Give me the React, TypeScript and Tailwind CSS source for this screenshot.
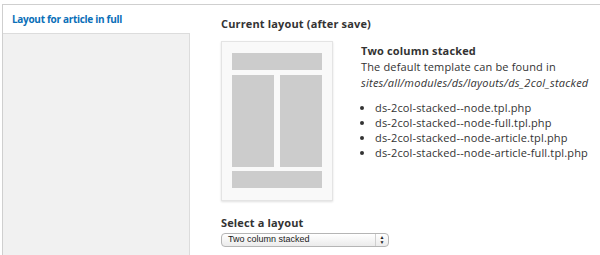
const files = [
  "ds-2col-stacked--node.tpl.php",
  "ds-2col-stacked--node-full.tpl.php",
  "ds-2col-stacked--node-article.tpl.php",
  "ds-2col-stacked--node-article-full.tpl.php",
];

const LayoutPreview = () => (
  <div className="flex h-[160px] w-[112px] shrink-0 flex-col border border-[#e4e4e4] bg-[#f9f9f9] px-[10px] pt-[11px] shadow-[0_1px_2px_rgba(0,0,0,0.12)]">
    <div className="h-[17px] bg-[#cccccc]" />
    <div className="mt-[5px] flex h-[92px] gap-[6px]">
      <div className="flex-1 bg-[#cccccc]" />
      <div className="flex-1 bg-[#cccccc]" />
    </div>
    <div className="mt-[4px] h-[17px] bg-[#cccccc]" />
  </div>
);

const App = () => {
  return (
    <div className="h-[255px] w-[600px] overflow-hidden bg-white pl-[2px] pt-[4px] font-['Open_Sans',sans-serif] text-[#333]">
      <div className="flex h-full border-l border-t border-[#cfcfcf]">
        <div className="flex w-[187px] shrink-0 flex-col">
          <div className="h-[28px] bg-white pl-[9px] pt-[7px] text-[10px] font-bold leading-[14px] tracking-[-0.3px] text-[#0a6fb8]">
            Layout for article in full
          </div>
          <div className="flex-1 border-r border-t border-[#dcdcdc] bg-[#f1f1f1]" />
        </div>

        <div className="flex flex-col pl-[31px] pt-[11px] tracking-[0.15px]">
          <h3 className="text-[11px] font-bold leading-[16px] text-[#333]">
            Current layout (after save)
          </h3>
          <div className="mt-[9px] flex gap-[28px]">
            <LayoutPreview />
            <div className="pt-[2px] text-[11px] leading-[16px]">
              <div className="font-bold">Two column stacked</div>
              <div>The default template can be found in</div>
              <div className="italic tracking-[0.25px]">sites/all/modules/ds/layouts/ds_2col_stacked</div>
              <ul className="mt-[9px] list-disc pl-[14px] leading-[15px]">
                {files.map((f) => (
                  <li key={f}>{f}</li>
                ))}
              </ul>
            </div>
          </div>

          <div className="mt-[14px] text-[11px] font-bold leading-[16px]">Select a layout</div>
          <div className="mt-[2px] flex h-[14px] w-[168px] items-center rounded-[4px] border border-[#b5b5b5] bg-gradient-to-b from-white to-[#ebebeb] font-['Liberation_Sans',sans-serif] text-[9px] tracking-normal text-[#222]">
            <span className="flex-1 pl-[6px]">Two column stacked</span>
            <span className="flex h-full w-[13px] flex-col items-center justify-center border-l border-[#cfcfcf] text-[5px] leading-[5px]">
              <span>▲</span>
              <span>▼</span>
            </span>
          </div>
        </div>
      </div>
    </div>
  );
};

export default App;
